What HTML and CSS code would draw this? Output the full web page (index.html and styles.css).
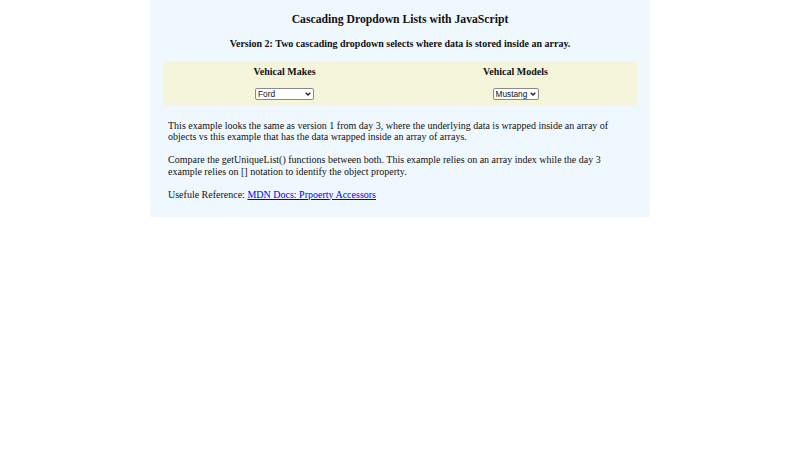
FILE: index.html
```html
<!DOCTYPE html>
<html lang="en">
<head>
<meta charset="utf-8">
<title>Cascading Dropdown Lists with JavaScript</title>
<link rel="stylesheet" href="styles.css">
</head>
<body>
<div class="container">
  <h1 class="title">Cascading Dropdown Lists with JavaScript</h1>
  <h2 class="subtitle">Version 2: Two cascading dropdown selects where data is stored inside an array.</h2>
  <div class="selects">
    <div class="col">
      <h3 class="label">Vehical Makes</h3>
      <span class="select-wrap">
        <select class="dropdown makes">
          <option>Ford</option>
          <option>Chevrolet</option>
          <option>Dodge</option>
        </select>
        <svg class="chev" viewBox="0 0 6 4" width="6" height="4" aria-hidden="true"><path d="M0.7 0.7 L3 3 L5.3 0.7" fill="none" stroke="#222" stroke-width="1.3"/></svg>
      </span>
    </div>
    <div class="col">
      <h3 class="label">Vehical Models</h3>
      <span class="select-wrap">
        <select class="dropdown models">
          <option>Mustang</option>
          <option>Focus</option>
          <option>Fiesta</option>
        </select>
        <svg class="chev" viewBox="0 0 6 4" width="6" height="4" aria-hidden="true"><path d="M0.7 0.7 L3 3 L5.3 0.7" fill="none" stroke="#222" stroke-width="1.3"/></svg>
      </span>
    </div>
  </div>
  <div class="notes">
    <p>This example looks the same as version 1 from day 3, where the underlying data is wrapped inside an array of objects vs this example that has the data wrapped inside an array of arrays.</p>
    <p>Compare the getUniqueList() functions between both. This example relies on an array index while the day 3 example relies on [] notation to identify the object property.</p>
    <p>Usefule Reference: <a href="#">MDN Docs: Prpoerty Accessors</a></p>
  </div>
</div>
</body>
</html>
```
FILE: styles.css
```css
html, body {
  margin: 0;
  padding: 0;
  background: #ffffff;
}
body {
  font-family: "Liberation Serif", "Times New Roman", serif;
  color: #111;
}
.container {
  width: 474px;
  margin: 0 auto;
  padding: 13px 13px 17px;
  background: #f0f8ff;
}
.title {
  margin: 0;
  font-size: 11.7px;
  line-height: 13.5px;
  text-align: center;
  font-weight: bold;
}
.subtitle {
  margin: 11.5px 0 0;
  font-size: 10px;
  line-height: 11.5px;
  text-align: center;
  font-weight: bold;
}
.selects {
  margin-top: 11px;
  background: #f5f5dc;
  padding: 5px 6px 5.5px;
  display: grid;
  grid-template-columns: 1fr 1fr;
}
.col {
  display: flex;
  flex-direction: column;
  align-items: center;
}
.label {
  margin: 0;
  font-size: 10px;
  line-height: 11.5px;
  font-weight: bold;
}
.select-wrap {
  position: relative;
  display: block;
  margin-top: 11px;
  height: 12px;
}
.dropdown {
  -webkit-appearance: none;
  appearance: none;
  display: block;
  height: 12px;
  margin: 0;
  padding: 0 10px 0 2px;
  box-sizing: border-box;
  border: 1px solid #8a8a8a;
  border-radius: 2px;
  background: #ffffff;
  font-family: "Liberation Sans", Arial, sans-serif;
  font-size: 8.3px;
  line-height: 10px;
  color: #111;
}
.makes { width: 59px; }
.models { width: 46px; }
.chev {
  position: absolute;
  right: 3px;
  top: 4px;
  pointer-events: none;
}
.notes {
  padding: 0 5px;
  margin-top: 14px;
}
.notes p {
  margin: 0 0 11.5px;
  font-size: 10px;
  line-height: 11.5px;
}
.notes p:last-child {
  margin-bottom: 0;
}
.notes a {
  color: #0000ee;
}
```
